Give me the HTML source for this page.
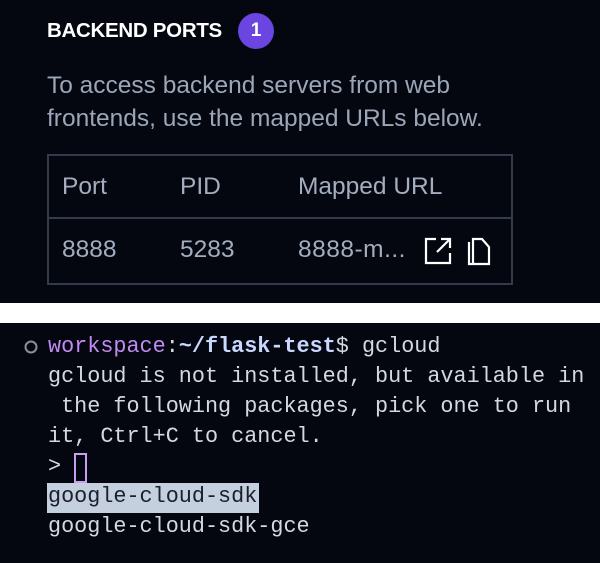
<!DOCTYPE html>
<html><head><meta charset="utf-8"><style>
*{margin:0;padding:0;box-sizing:border-box}
html,body{width:600px;height:563px;overflow:hidden;background:#04070f}
.top{position:absolute;left:0;top:0;width:600px;height:303px;background:#04070f;font-family:"Liberation Sans",sans-serif}
.strip{position:absolute;left:0;top:303px;width:600px;height:20px;background:#fff}
.term{position:absolute;left:0;top:323px;width:600px;height:240px;background:#04070f;font-family:"Liberation Mono",monospace;font-size:21.8px;color:#d3d9e2}
.h{position:absolute;left:47px;top:19px;font-size:20.5px;font-weight:bold;color:#fff;letter-spacing:-0.3px}
.badge{position:absolute;left:238px;top:13px;width:36px;height:36px;border-radius:50%;background:#6b45e0;color:#fff;font-weight:bold;font-size:19px;text-align:center;line-height:36px}
.d{position:absolute;left:47px;top:69px;font-size:24.5px;line-height:33px;color:#9ba6b9}
.tbl{position:absolute;left:47px;top:154px;width:466px;height:131px;border:2px solid #323a4b}
.div{position:absolute;left:47px;top:217px;width:466px;height:2px;background:#323a4b}
.c{position:absolute;font-size:24.5px;color:#a3adbf}
.l{position:absolute;left:48px;white-space:pre;line-height:30px}
</style></head><body>
<div class="top">
<div class="h">BACKEND PORTS</div>
<div class="badge">1</div>
<div class="d">To access backend servers from web<br>frontends, use the mapped URLs below.</div>
<div class="tbl"></div><div class="div"></div>
<div class="c" style="left:62px;top:173px">Port</div>
<div class="c" style="left:180px;top:173px">PID</div>
<div class="c" style="left:298px;top:173px">Mapped URL</div>
<div class="c" style="left:62px;top:236px">8888</div>
<div class="c" style="left:180px;top:236px">5283</div>
<div class="c" style="left:298px;top:236px;letter-spacing:0.5px">8888-m...</div>
<svg style="position:absolute;left:423px;top:236px" width="30" height="30" viewBox="0 0 30 30" fill="none" stroke="#fff" stroke-width="2.2"><path d="M13 3H3v24h24V17"/><path d="M14 16L26 4M18 3h9v9"/></svg>
<svg style="position:absolute;left:465px;top:236px" width="28" height="30" viewBox="0 0 28 30" fill="none" stroke="#fff" stroke-width="2.2"><path d="M8 3h9l7 8v17H8z"/><path d="M4 6v22h3"/></svg>
</div>
<div class="strip"></div>
<div class="term">
<svg style="position:absolute;left:23px;top:16px" width="16" height="16"><circle cx="8" cy="8" r="5.5" fill="none" stroke="#8a8f99" stroke-width="2"/></svg>
<div class="l" style="top:9px"><span style="color:#c08bf2">workspace</span>:<span style="color:#c9d8ff;font-weight:bold">~/flask-test</span>$ gcloud</div>
<div class="l" style="top:39px">gcloud is not installed, but available in</div>
<div class="l" style="top:69px"> the following packages, pick one to run</div>
<div class="l" style="top:99px">it, Ctrl+C to cancel.</div>
<div class="l" style="top:129px">&gt; </div>
<div style="position:absolute;left:74px;top:130px;width:13px;height:30px;border:2px solid #c8a0f0"></div>
<div style="position:absolute;left:47px;top:160px;width:212px;height:30px;background:#c5d0de"></div>
<div class="l" style="top:159px;color:#1a1f2a">google-cloud-sdk</div>
<div class="l" style="top:189px">google-cloud-sdk-gce</div>
</div>
</body></html>
